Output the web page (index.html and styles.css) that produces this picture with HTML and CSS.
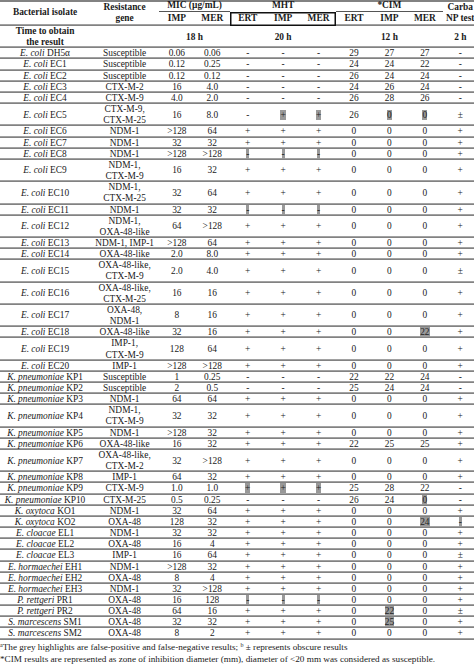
FILE: index.html
```html
<!DOCTYPE html>
<html>
<head>
<meta charset="utf-8">
<link rel="stylesheet" href="styles.css">
</head>
<body>
<div class="wrap">
<table class="tbl">
<colgroup>
<col class="c-iso"><col class="c-gene">
<col class="c-n"><col class="c-n"><col class="c-n"><col class="c-n"><col class="c-n"><col class="c-n"><col class="c-n"><col class="c-n"><col class="c-n">
</colgroup>
<thead>
<tr class="h1">
<th rowspan="2" class="top">Bacterial isolate</th>
<th rowspan="2" class="top">Resistance<br>gene</th>
<th colspan="2" class="top grp">MIC (µg/mL)</th>
<th colspan="3" class="top">MHT</th>
<th colspan="3" class="top grp">*CIM</th>
<th rowspan="2" class="top">Carba<br>NP test</th>
</tr>
<tr class="h2">
<th>IMP</th><th>MER</th>
<th class="bx-l">ERT</th><th class="bx-m">IMP</th><th class="bx-r">MER</th>
<th>ERT</th><th>IMP</th><th>MER</th>
</tr>
</thead>
<tbody>
<tr class="time">
<th>Time to obtain<br>the result</th><th></th>
<th colspan="2">18 h</th><th colspan="3">20 h</th><th colspan="3">12 h</th><th>2 h</th>
</tr>
<tr><td><i>E. coli</i> DH5α</td><td>Susceptible</td><td>0.06</td><td>0.06</td><td>-</td><td>-</td><td>-</td><td>29</td><td>27</td><td>27</td><td>-</td></tr>
<tr><td><i>E. coli</i> EC1</td><td>Susceptible</td><td>0.12</td><td>0.25</td><td>-</td><td>-</td><td>-</td><td>24</td><td>24</td><td>22</td><td>-</td></tr>
<tr><td><i>E. coli</i> EC2</td><td>Susceptible</td><td>0.12</td><td>0.12</td><td>-</td><td>-</td><td>-</td><td>26</td><td>24</td><td>24</td><td>-</td></tr>
<tr><td><i>E. coli</i> EC3</td><td>CTX-M-2</td><td>16</td><td>4.0</td><td>-</td><td>-</td><td>-</td><td>24</td><td>26</td><td>24</td><td>-</td></tr>
<tr><td><i>E. coli</i> EC4</td><td>CTX-M-9</td><td>4.0</td><td>2.0</td><td>-</td><td>-</td><td>-</td><td>26</td><td>28</td><td>26</td><td>-</td></tr>
<tr><td><i>E. coli</i> EC5</td><td>CTX-M-9,<br>CTX-M-25</td><td>16</td><td>8.0</td><td>-</td><td><span class="hl">+</span></td><td><span class="hl">+</span></td><td>26</td><td><span class="hl">0</span></td><td><span class="hl">0</span></td><td>±</td></tr>
<tr><td><i>E. coli</i> EC6</td><td>NDM-1</td><td>&gt;128</td><td>64</td><td>+</td><td>+</td><td>+</td><td>0</td><td>0</td><td>0</td><td>+</td></tr>
<tr><td><i>E. coli</i> EC7</td><td>NDM-1</td><td>32</td><td>32</td><td>+</td><td>+</td><td>+</td><td>0</td><td>0</td><td>0</td><td>+</td></tr>
<tr><td><i>E. coli</i> EC8</td><td>NDM-1</td><td>&gt;128</td><td>&gt;128</td><td><span class="hl">-</span></td><td><span class="hl">-</span></td><td><span class="hl">-</span></td><td>0</td><td>0</td><td>0</td><td>+</td></tr>
<tr><td><i>E. coli</i> EC9</td><td>NDM-1,<br>CTX-M-9</td><td>16</td><td>32</td><td>+</td><td>+</td><td>+</td><td>0</td><td>0</td><td>0</td><td>+</td></tr>
<tr><td><i>E. coli</i> EC10</td><td>NDM-1,<br>CTX-M-25</td><td>32</td><td>64</td><td>+</td><td>+</td><td>+</td><td>0</td><td>0</td><td>0</td><td>+</td></tr>
<tr><td><i>E. coli</i> EC11</td><td>NDM-1</td><td>32</td><td>32</td><td><span class="hl">-</span></td><td><span class="hl">-</span></td><td><span class="hl">-</span></td><td>0</td><td>0</td><td>0</td><td>+</td></tr>
<tr><td><i>E. coli</i> EC12</td><td>NDM-1,<br>OXA-48-like</td><td>64</td><td>&gt;128</td><td>+</td><td>+</td><td>+</td><td>0</td><td>0</td><td>0</td><td>+</td></tr>
<tr><td><i>E. coli</i> EC13</td><td>NDM-1, IMP-1</td><td>&gt;128</td><td>64</td><td>+</td><td>+</td><td>+</td><td>0</td><td>0</td><td>0</td><td>+</td></tr>
<tr><td><i>E. coli</i> EC14</td><td>OXA-48-like</td><td>2.0</td><td>8.0</td><td>+</td><td>+</td><td>+</td><td>0</td><td>0</td><td>0</td><td>+</td></tr>
<tr><td><i>E. coli</i> EC15</td><td>OXA-48-like,<br>CTX-M-9</td><td>2.0</td><td>4.0</td><td>+</td><td>+</td><td>+</td><td>0</td><td>0</td><td>0</td><td>±</td></tr>
<tr><td><i>E. coli</i> EC16</td><td>OXA-48-like,<br>CTX-M-25</td><td>16</td><td>16</td><td>+</td><td>+</td><td>+</td><td>0</td><td>0</td><td>0</td><td>+</td></tr>
<tr><td><i>E. coli</i> EC17</td><td>OXA-48,<br>NDM-1</td><td>8</td><td>16</td><td>+</td><td>+</td><td>+</td><td>0</td><td>0</td><td>0</td><td>+</td></tr>
<tr><td><i>E. coli</i> EC18</td><td>OXA-48-like</td><td>32</td><td>16</td><td>+</td><td>+</td><td>+</td><td>0</td><td>0</td><td><span class="hl">22</span></td><td>+</td></tr>
<tr><td><i>E. coli</i> EC19</td><td>IMP-1,<br>CTX-M-9</td><td>128</td><td>64</td><td>+</td><td>+</td><td>+</td><td>0</td><td>0</td><td>0</td><td>+</td></tr>
<tr><td><i>E. coli</i> EC20</td><td>IMP-1</td><td>&gt;128</td><td>&gt;128</td><td>+</td><td>+</td><td>+</td><td>0</td><td>0</td><td>0</td><td>+</td></tr>
<tr><td><i>K. pneumoniae</i> KP1</td><td>Susceptible</td><td>1</td><td>0.25</td><td>-</td><td>-</td><td>-</td><td>22</td><td>22</td><td>24</td><td>-</td></tr>
<tr><td><i>K. pneumoniae</i> KP2</td><td>Susceptible</td><td>2</td><td>0.5</td><td>-</td><td>-</td><td>-</td><td>25</td><td>24</td><td>24</td><td>-</td></tr>
<tr><td><i>K. pneumoniae</i> KP3</td><td>NDM-1</td><td>64</td><td>64</td><td>+</td><td>+</td><td>+</td><td>0</td><td>0</td><td>0</td><td>+</td></tr>
<tr><td><i>K. pneumoniae</i> KP4</td><td>NDM-1,<br>CTX-M-9</td><td>32</td><td>32</td><td>+</td><td>+</td><td>+</td><td>0</td><td>0</td><td>0</td><td>+</td></tr>
<tr><td><i>K. pneumoniae</i> KP5</td><td>NDM-1</td><td>&gt;128</td><td>32</td><td>+</td><td>+</td><td>+</td><td>0</td><td>0</td><td>0</td><td>+</td></tr>
<tr><td><i>K. pneumoniae</i> KP6</td><td>OXA-48-like</td><td>16</td><td>32</td><td>+</td><td>+</td><td>+</td><td>22</td><td>25</td><td>25</td><td>+</td></tr>
<tr><td><i>K. pneumoniae</i> KP7</td><td>OXA-48-like,<br>CTX-M-2</td><td>32</td><td>&gt;128</td><td>+</td><td>+</td><td>+</td><td>0</td><td>0</td><td>0</td><td>+</td></tr>
<tr><td><i>K. pneumoniae</i> KP8</td><td>IMP-1</td><td>64</td><td>32</td><td>+</td><td>+</td><td>+</td><td>0</td><td>0</td><td>0</td><td>+</td></tr>
<tr><td><i>K. pneumoniae</i> KP9</td><td>CTX-M-9</td><td>1.0</td><td>1.0</td><td><span class="hl">+</span></td><td><span class="hl">+</span></td><td><span class="hl">+</span></td><td>25</td><td>28</td><td>22</td><td>-</td></tr>
<tr><td><i>K. pneumoniae</i> KP10</td><td>CTX-M-25</td><td>0.5</td><td>0.25</td><td>-</td><td>-</td><td>-</td><td>26</td><td>24</td><td><span class="hl">0</span></td><td>-</td></tr>
<tr><td><i>K. oxytoca</i> KO1</td><td>NDM-1</td><td>32</td><td>64</td><td>+</td><td>+</td><td>+</td><td>0</td><td>0</td><td>0</td><td>+</td></tr>
<tr><td><i>K. oxytoca</i> KO2</td><td>OXA-48</td><td>128</td><td>32</td><td>+</td><td>+</td><td>+</td><td>0</td><td>0</td><td><span class="hl">24</span></td><td><span class="hl">-</span></td></tr>
<tr><td><i>E. cloacae</i> EL1</td><td>NDM-1</td><td>32</td><td>32</td><td>+</td><td>+</td><td>+</td><td>0</td><td>0</td><td>0</td><td>+</td></tr>
<tr><td><i>E. cloacae</i> EL2</td><td>OXA-48</td><td>16</td><td>4</td><td>+</td><td>+</td><td>+</td><td>0</td><td>0</td><td>0</td><td>+</td></tr>
<tr><td><i>E. cloacae</i> EL3</td><td>IMP-1</td><td>16</td><td>64</td><td>+</td><td>+</td><td>+</td><td>0</td><td>0</td><td>0</td><td>±</td></tr>
<tr><td><i>E. hormaechei</i> EH1</td><td>NDM-1</td><td>&gt;128</td><td>32</td><td>+</td><td>+</td><td>+</td><td>0</td><td>0</td><td>0</td><td>+</td></tr>
<tr><td><i>E. hormaechei</i> EH2</td><td>OXA-48</td><td>8</td><td>4</td><td>+</td><td>+</td><td>+</td><td>0</td><td>0</td><td>0</td><td>+</td></tr>
<tr><td><i>E. hormaechei</i> EH3</td><td>NDM-1</td><td>32</td><td>&gt;128</td><td>+</td><td>+</td><td>+</td><td>0</td><td>0</td><td>0</td><td>+</td></tr>
<tr><td><i>P. rettgeri</i> PR1</td><td>OXA-48</td><td>16</td><td>128</td><td><span class="hl">-</span></td><td><span class="hl">-</span></td><td><span class="hl">-</span></td><td>0</td><td>0</td><td>0</td><td>+</td></tr>
<tr><td><i>P. rettgeri</i> PR2</td><td>OXA-48</td><td>64</td><td>16</td><td>+</td><td>+</td><td>+</td><td>0</td><td><span class="hl">22</span></td><td>0</td><td>±</td></tr>
<tr><td><i>S. marcescens</i> SM1</td><td>OXA-48</td><td>32</td><td>32</td><td>+</td><td>+</td><td>+</td><td>0</td><td><span class="hl">25</span></td><td>0</td><td>+</td></tr>
<tr><td><i>S. marcescens</i> SM2</td><td>OXA-48</td><td>8</td><td>2</td><td>+</td><td>+</td><td>+</td><td>0</td><td>0</td><td>0</td><td>+</td></tr>
</tbody>
</table>
<div class="notes">
<p><sup>a</sup>The grey highlights are false-positive and false-negative results; <sup>b</sup> ± represents obscure results</p>
<p>*CIM results are represented as zone of inhibition diameter (mm), diameter of &lt;20 mm was considered as susceptible.</p>
</div>
</div>
</body>
</html>
```
FILE: styles.css
```css
html, body {
  margin: 0;
  padding: 0;
  background: #ffffff;
  overflow: hidden;
}
body {
  font-family: "Liberation Serif", "Times New Roman", serif;
  color: #1a1a1a;
}
.wrap {
  width: 478px;
}
.tbl {
  width: 478px;
  border-collapse: collapse;
  table-layout: fixed;
  font-size: 9.4px;
}
.c-iso { width: 90px; }
.c-gene { width: 69px; }
.c-n { width: 35.4px; }

.tbl th, .tbl td {
  padding: 0;
  text-align: center;
  vertical-align: middle;
  line-height: 11.15px;
  white-space: nowrap;
  box-shadow: inset 0 -1.8px 0 #828282;
}
.tbl th {
  font-weight: bold;
}
.tbl .h1 th {
  height: 12px;
  box-shadow: inset 0 2px 0 #828282;
}
.tbl .h1 th[rowspan] {
  box-shadow: inset 0 2px 0 #828282, inset 0 -1.8px 0 #828282;
}
.tbl .h1 th.grp {
  box-shadow: inset 0 2px 0 #828282, inset 0 -1px 0 #555555;
}
.tbl .h2 th {
  height: 14px;
}
.tbl .h2 th.bx-l {
  box-shadow: inset 1.5px 1.5px 0 #111111, inset 0 -1.5px 0 #111111;
}
.tbl .h2 th.bx-m {
  box-shadow: inset 0 1.5px 0 #111111, inset 0 -1.5px 0 #111111;
}
.tbl .h2 th.bx-r {
  box-shadow: inset -1.5px 1.5px 0 #111111, inset 0 -1.5px 0 #111111;
}
.tbl .time th {
  height: 22px;
}
.hl {
  background: #999999;
  color: #222222;
}
.notes {
  font-size: 9.2px;
  line-height: 12px;
  padding-top: 1px;
}
.notes p {
  margin: 0;
  white-space: nowrap;
}
.notes sup {
  font-size: 6px;
  line-height: 0;
  vertical-align: 3px;
}
```
